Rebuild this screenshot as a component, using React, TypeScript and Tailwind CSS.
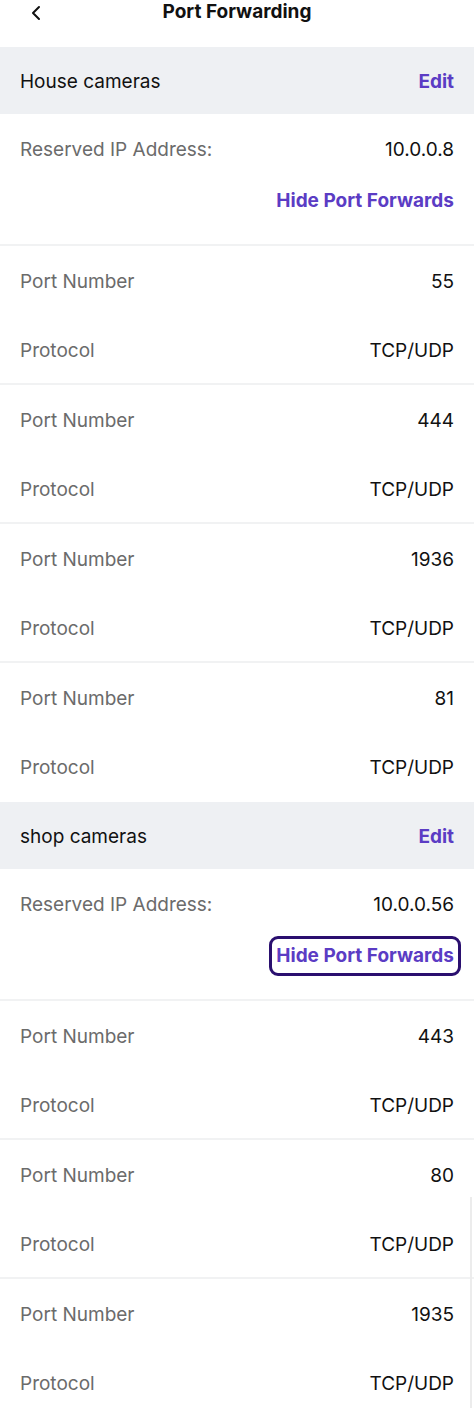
import { ChevronLeft } from "lucide-react";

type Group = {
  name: string;
  ip: string;
  focused?: boolean;
  ports: string[];
};

const groups: Group[] = [
  { name: "House cameras", ip: "10.0.0.8", ports: ["55", "444", "1936", "81"] },
  { name: "shop cameras", ip: "10.0.0.56", focused: true, ports: ["443", "80", "1935"] },
];

function Row({ label, value }: { label: string; value: string }) {
  return (
    <div className="flex h-[69px] items-center justify-between px-5 pt-[4px]">
      <span className="text-[#6b6b6b]">{label}</span>
      <span className="text-[#111]">{value}</span>
    </div>
  );
}

export default function App() {
  return (
    <div
      className="relative h-[1408px] w-[474px] overflow-hidden bg-white text-[19px]"
      style={{ fontFamily: "Inter, 'Noto Sans', sans-serif" }}
    >
      {/* top bar */}
      <div className="relative flex h-[47px] items-start justify-center">
        <button className="absolute left-[24px] top-[1px] text-[#111]" aria-label="Back">
          <ChevronLeft size={24} strokeWidth={2} />
        </button>
        <h1 className="text-[19px] font-bold leading-[24px] text-[#111]">Port Forwarding</h1>
      </div>

      {groups.map((g) => (
        <section key={g.name}>
          <div className="flex h-[67px] items-center justify-between bg-[#eef0f3] px-5 pt-[4px]">
            <span className="text-[#111]">{g.name}</span>
            <button className="font-bold text-[#5b3cc4]">Edit</button>
          </div>

          <div className="h-[132px] border-b-2 border-[#f1f2f3] px-5">
            <div className="flex h-[70px] items-center justify-between pt-[3px]">
              <span className="text-[#6b6b6b]">Reserved IP Address:</span>
              <span className="text-[#111]">{g.ip}</span>
            </div>
            <div className="flex justify-end">
              <button
                className={
                  g.focused
                    ? "-mr-[7px] -mt-[3px] rounded-[9px] border-[3px] border-[#2a0f6f] px-[4px] pb-[3px] pt-[3px] font-bold leading-[28px] text-[#5b3cc4]"
                    : "mt-[3px] font-bold leading-[28px] text-[#5b3cc4]"
                }
              >
                Hide Port Forwards
              </button>
            </div>
          </div>

          {g.ports.map((p, i) => (
            <div
              key={p}
              className={
                i === g.ports.length - 1 ? "h-[139px]" : "h-[139px] border-b-2 border-[#f1f2f3]"
              }
            >
              <Row label="Port Number" value={p} />
              <Row label="Protocol" value="TCP/UDP" />
            </div>
          ))}
        </section>
      ))}

      {/* scrollbar */}
      <div className="absolute right-[2px] top-[1197px] h-[211px] w-[2px] bg-[#ececec]" />
    </div>
  );
}
